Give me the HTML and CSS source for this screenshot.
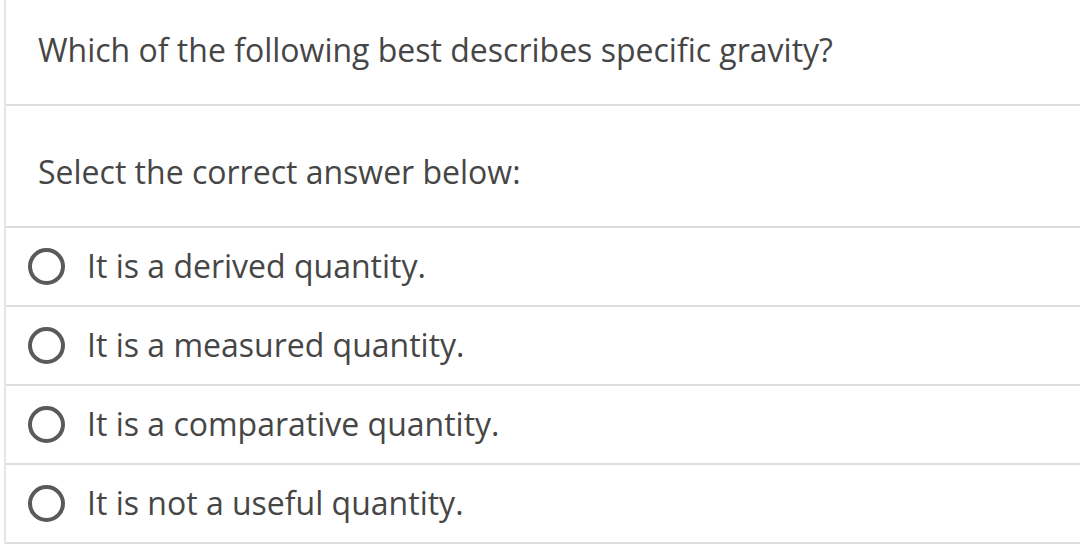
FILE: index.html
```html
<!DOCTYPE html>
<html>
<head>
<meta charset="utf-8">
<link rel="stylesheet" href="styles.css">
</head>
<body>
<div class="panel">
  <div class="question">Which of the following best describes specific gravity?</div>
  <div class="prompt">Select the correct answer below:</div>
  <ul class="options">
    <li class="option"><span class="radio"></span><span class="label">It is a derived quantity.</span></li>
    <li class="option"><span class="radio"></span><span class="label">It is a measured quantity.</span></li>
    <li class="option"><span class="radio"></span><span class="label">It is a comparative quantity.</span></li>
    <li class="option"><span class="radio"></span><span class="label">It is not a useful quantity.</span></li>
  </ul>
</div>
</body>
</html>
```

FILE: styles.css
```css
html, body {
  margin: 0;
  padding: 0;
  background: #fff;
}
body {
  font-family: "Open Sans", "Liberation Sans", sans-serif;
  color: #464646;
  font-size: 32px;
}
.panel {
  margin-left: 4px;
  border-left: 2px solid #e6e6e6;
}
.question {
  height: 106px;
  box-sizing: border-box;
  padding: 28px 0 0 32px;
  line-height: 44px;
  border-bottom: 2px solid #dedede;
}
.prompt {
  height: 122px;
  box-sizing: border-box;
  padding: 44px 0 0 32px;
  line-height: 44px;
  border-bottom: 2px solid #dedede;
}
.options {
  list-style: none;
  margin: 0;
  padding: 0;
}
.option {
  display: flex;
  align-items: center;
  height: 79px;
  box-sizing: border-box;
  border-bottom: 2px solid #dedede;
  padding-left: 22px;
}
.radio {
  width: 37px;
  height: 37px;
  box-sizing: border-box;
  border: 4px solid #5a5a5a;
  border-radius: 50%;
  flex: none;
}
.label {
  margin-left: 22px;
  margin-bottom: 2px;
  line-height: 44px;
}
```
